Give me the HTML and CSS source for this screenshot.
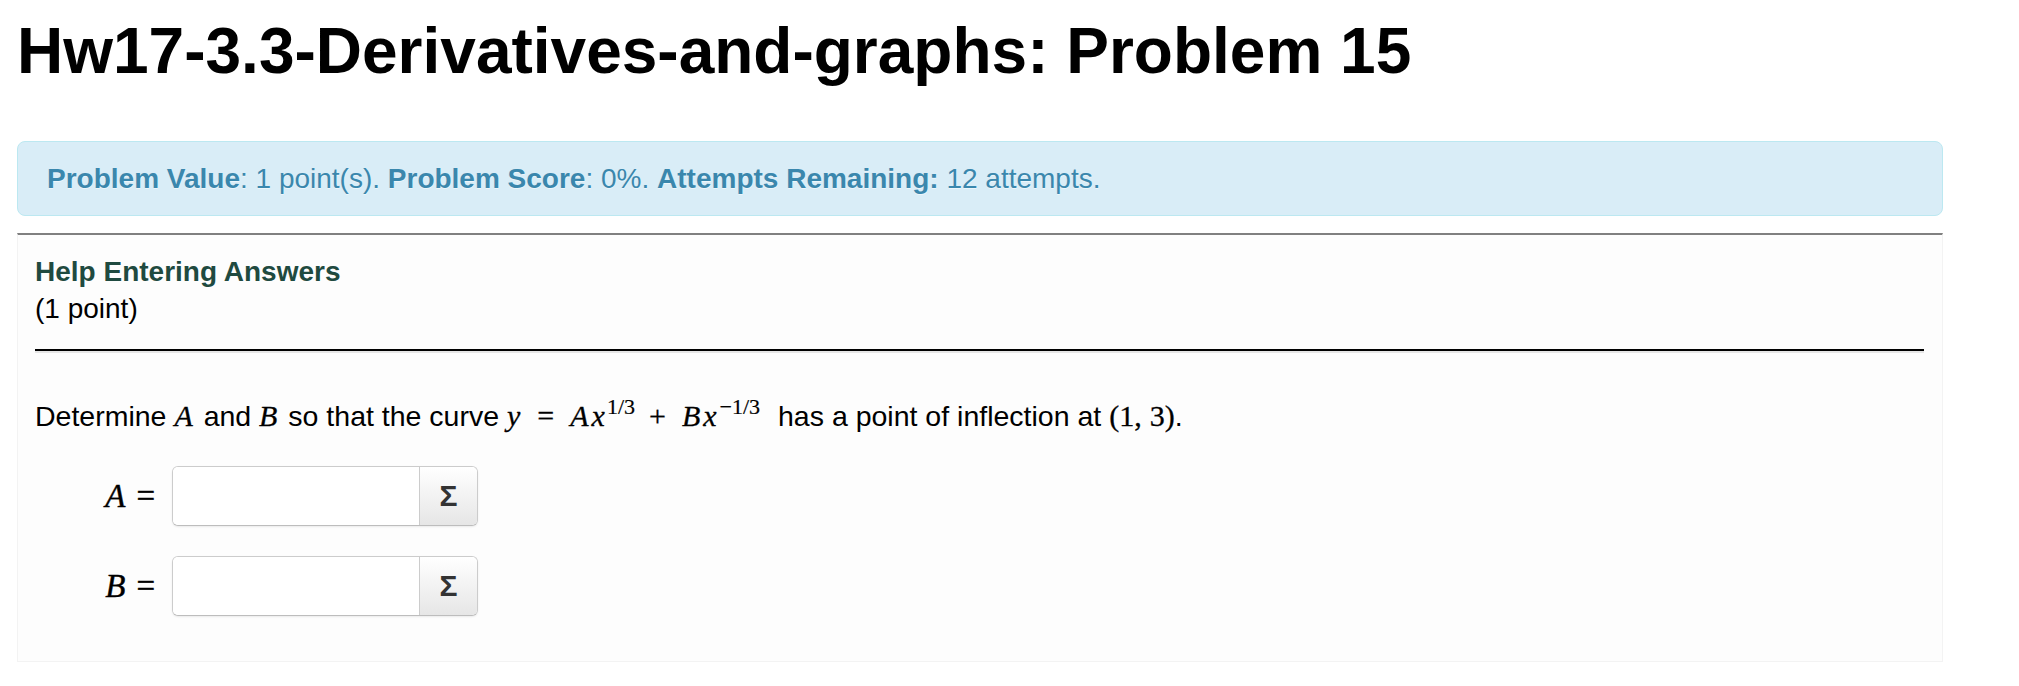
FILE: index.html
```html
<!DOCTYPE html>
<html lang="en">
<head>
  <meta charset="UTF-8">
  <meta name="viewport" content="width=device-width, initial-scale=1.0">
  <title>Hw17-3.3-Derivatives-and-graphs: Problem 15</title>
  <link rel="stylesheet" href="styles.css">
</head>
<body>
  <div class="page">
    <h1 class="page-title">Hw17-3.3-Derivatives-and-graphs: Problem 15</h1>

    <div class="alert-info">
      <b>Problem Value</b>: 1 point(s). <b>Problem Score</b>: 0%. <b>Attempts Remaining:</b> 12 attempts.
    </div>

    <div class="problem">
      <div class="problem-head">
        <a class="help-link">Help Entering Answers</a>
        <div class="points">(1 point)</div>
      </div>

      <p class="statement">
        Determine <span class="math"><span class="mvar">A</span></span> and <span class="math"><span class="mvar">B</span></span> so that the curve
        <span class="math"><span class="mvar">y</span><span class="op">=</span><span class="mvar">Ax</span><sup>1/3</sup><span class="op">+</span><span class="mvar">Bx</span><sup class="last">&minus;1/3</sup></span>
        has a point of inflection at <span class="math">(1,<span class="thin"></span>3)</span>.
      </p>

      <div class="answers">
        <span class="ans-label"><span class="mvar">A</span><span class="eq">=</span></span>
        <div class="ans-input">
          <input type="text">
          <button class="eq-btn">&Sigma;</button>
        </div>

        <span class="ans-label"><span class="mvar">B</span><span class="eq">=</span></span>
        <div class="ans-input">
          <input type="text">
          <button class="eq-btn">&Sigma;</button>
        </div>
      </div>
    </div>
  </div>
</body>
</html>
```

FILE: styles.css
```css
body {
  margin: 0;
  font-family: "Liberation Sans", Arial, sans-serif;
  color: #000;
  background: #fff;
}

.page {
  padding: 0 76px 0 17px;
}

.page-title {
  margin: 0 0 55px;
  padding-top: 16px;
  font-size: 64px;
  line-height: 70px;
  font-weight: bold;
}

.alert-info {
  padding: 17px 29px 16px;
  font-size: 28px;
  line-height: 40px;
  color: #3a87ad;
  background: #d9edf7;
  border: 1px solid #bce8f1;
  border-radius: 8px;
  text-shadow: 0 1px 0 rgba(255, 255, 255, 0.5);
  margin-bottom: 17px;
}

.problem {
  background: #fdfdfd;
  border: 1px solid #f3f3f3;
  border-top: 2px solid #808080;
  padding: 18px 18px 45px 17px;
}

.problem-head {
  font-size: 28px;
  line-height: 37px;
  padding-bottom: 22px;
  border-bottom: 2px solid #000;
  box-shadow: 0 2px 0 #e6e6e6;
}

.help-link {
  display: block;
  font-weight: bold;
  color: #1f4a40;
}

.statement {
  margin: 47px 0 31px;
  font-size: 28.5px;
  line-height: 37px;
}

.math {
  font-family: "Liberation Serif", "Times New Roman", serif;
  font-size: 30px;
  line-height: 1;
  -webkit-text-stroke: 0.3px #000;
}

.mvar {
  font-style: italic;
  letter-spacing: 3px;
}

.math sup {
  font-size: 22px;
  line-height: 0;
  vertical-align: 12px;
  margin-left: -1px;
  -webkit-text-stroke: 0.2px #000;
}

.math sup.last {
  margin-left: 0;
  margin-right: 10px;
}

.op {
  margin: 0 16px 0 14px;
}

.thin {
  display: inline-block;
  width: 8px;
}

.answers {
  display: grid;
  grid-template-columns: 120px 306px;
  column-gap: 17px;
  row-gap: 30px;
  align-items: center;
}

.ans-label {
  text-align: right;
  font-family: "Liberation Serif", "Times New Roman", serif;
  font-size: 33px;
  line-height: 33px;
  -webkit-text-stroke: 0.4px #000;
}

.ans-label .mvar {
  letter-spacing: 1px;
}

.eq {
  margin-left: 10px;
}

.ans-input {
  display: flex;
  height: 58px;
  border: 1px solid #cccccc;
  border-bottom-color: #bdbdbd;
  border-radius: 6px;
  overflow: hidden;
  box-shadow: 0 1px 2px rgba(0, 0, 0, 0.08);
  background: #fff;
}

.ans-input input {
  flex: 1;
  min-width: 0;
  border: none;
  outline: none;
  padding: 0 12px;
  font-size: 26px;
  background: #fff;
}

.eq-btn {
  width: 58px;
  border: none;
  border-left: 1px solid #cccccc;
  background: linear-gradient(to bottom, #ffffff, #e6e6e6);
  color: #333;
  font-family: "Liberation Sans", Arial, sans-serif;
  font-size: 30px;
  font-weight: bold;
  padding: 0;
  cursor: pointer;
}
```
